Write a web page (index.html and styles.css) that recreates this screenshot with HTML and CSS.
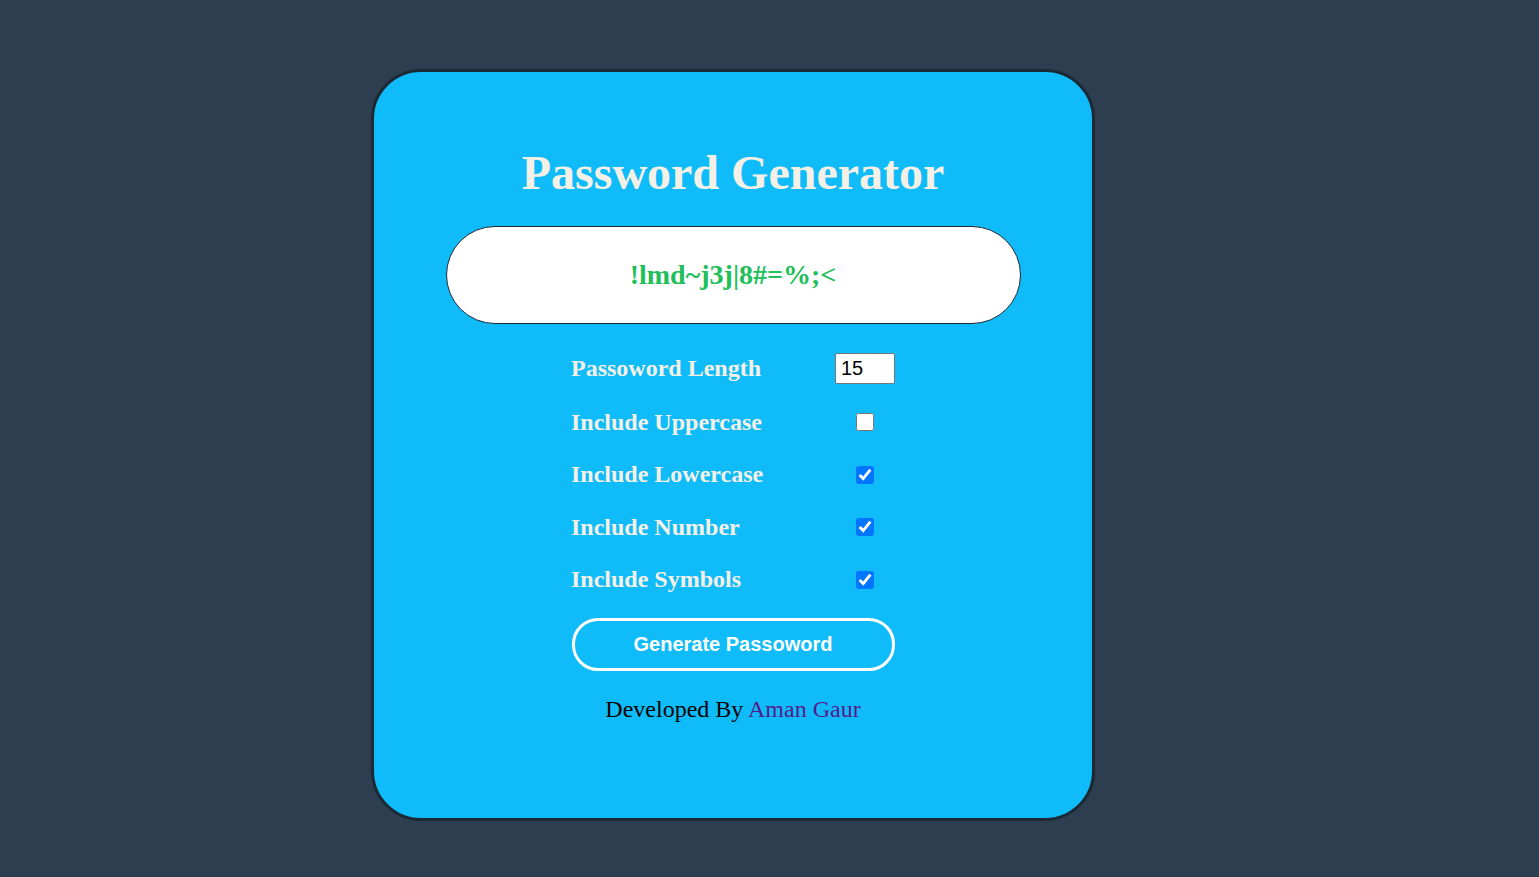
FILE: index.html
```html
<!DOCTYPE html>
<html lang="en">
<head>
<meta charset="utf-8">
<title>Password Generator</title>
<link rel="stylesheet" href="styles.css">
</head>
<body>
<div class="card">
  <h1 class="title">Password Generator</h1>
  <div class="result">!lmd~j3j|8#=%;&lt;</div>
  <div class="options">
    <label class="opt-label" for="len">Passoword Length</label>
    <div class="opt-ctrl"><input id="len" class="len" type="number" value="15"></div>
    <label class="opt-label" for="up">Include Uppercase</label>
    <div class="opt-ctrl"><input id="up" class="chk" type="checkbox"></div>
    <label class="opt-label" for="low">Include Lowercase</label>
    <div class="opt-ctrl"><input id="low" class="chk" type="checkbox" checked></div>
    <label class="opt-label" for="num">Include Number</label>
    <div class="opt-ctrl"><input id="num" class="chk" type="checkbox" checked></div>
    <label class="opt-label" for="sym">Include Symbols</label>
    <div class="opt-ctrl"><input id="sym" class="chk" type="checkbox" checked></div>
  </div>
  <button class="gen" type="button">Generate Passoword</button>
  <p class="credit">Developed By <a class="author" href="#">Aman Gaur</a></p>
</div>
</body>
</html>
```
FILE: styles.css
```css
html, body {
  margin: 0;
  padding: 0;
}
body {
  background: #2c3e50;
  font-family: "Liberation Serif", "Times New Roman", serif;
  min-height: 877px;
  padding-top: 69px;
  box-sizing: border-box;
}
.card {
  box-sizing: border-box;
  width: 724px;
  margin-left: 371px;
  height: 752px;
  background: #0fbcf9;
  border: 3px solid #1c2834;
  border-radius: 50px;
  padding-top: 73px;
  display: flex;
  flex-direction: column;
  align-items: center;
}
.title {
  margin: 0;
  font-size: 48px;
  font-weight: bold;
  color: #f5f0e6;
  line-height: 55px;
}
.result {
  margin-top: 26px;
  box-sizing: border-box;
  width: 575px;
  height: 98px;
  background: #fff;
  border: 1px solid #1c2834;
  border-radius: 49px;
  display: flex;
  align-items: center;
  justify-content: center;
  font-size: 28px;
  font-weight: bold;
  color: #20bf5a;
}
.options {
  margin-top: 27.5px;
  width: 324px;
  display: grid;
  grid-template-columns: 1fr 60px;
  grid-template-rows: 34px;
  grid-auto-rows: 32px;
  row-gap: 20.5px;
  align-items: center;
}
.opt-label {
  font-size: 24px;
  font-weight: bold;
  color: #f5f0e6;
}
.opt-ctrl {
  display: flex;
  justify-content: center;
  align-items: center;
}
.len {
  box-sizing: border-box;
  width: 60px;
  height: 31px;
  padding: 0 5px;
  font-family: "Liberation Sans", Arial, sans-serif;
  font-size: 20px;
  border: 1px solid #767676;
  border-radius: 2px;
  background: #fff;
  color: #000;
}
.len::-webkit-inner-spin-button,
.len::-webkit-outer-spin-button {
  -webkit-appearance: none;
  margin: 0;
}
.chk {
  width: 18px;
  height: 18px;
  margin: 0;
  accent-color: #0075ff;
}
.gen {
  margin-top: 22.5px;
  box-sizing: border-box;
  width: 323px;
  height: 52.5px;
  background: transparent;
  border: 3px solid #fff;
  border-radius: 26px;
  color: #fff;
  font-family: "Liberation Sans", Arial, sans-serif;
  font-size: 20px;
  font-weight: bold;
  cursor: pointer;
}
.credit {
  margin: 25.5px 0 0;
  font-size: 24px;
  color: #000;
}
.author {
  color: #551a8b;
  text-decoration: none;
}
```
